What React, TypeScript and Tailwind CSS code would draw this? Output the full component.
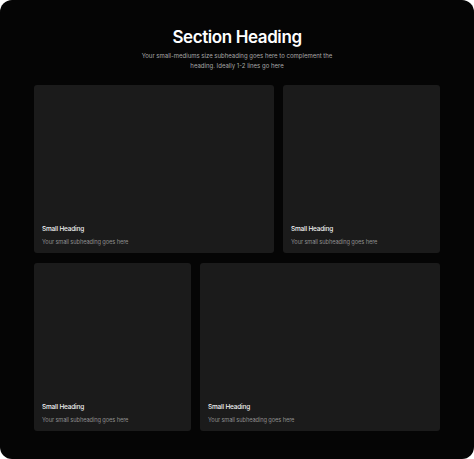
type Card = {
  title: string;
  subtitle: string;
};

function FeatureCard({ title, subtitle }: Card) {
  return (
    <div className="flex flex-col justify-end rounded-[3px] bg-[#1b1b1b] px-2 pb-[7px]">
      <h3 className="text-[6.5px] font-medium leading-[10px] tracking-[-0.2px] text-[#f2f2f2]">{title}</h3>
      <p className="mt-[3px] text-[5.7px] leading-[9px] tracking-[-0.1px] text-[#8e8e8e]">{subtitle}</p>
    </div>
  );
}

export default function App() {
  const card: Card = { title: 'Small Heading', subtitle: 'Your small subheading goes here' };

  return (
    <div className="h-[459px] w-[474px] bg-white font-['Inter',sans-serif]">
      <div className="flex h-full w-full flex-col rounded-[12px] bg-[#050505] px-[34px] pt-[26px]">
        <div className="flex flex-col items-center text-center">
          <h1 className="text-[17px] font-semibold leading-[22px] tracking-[-0.4px] text-white">Section Heading</h1>
          <p className="mt-[3px] w-[200px] text-[6px] leading-[10px] text-[#a8a8a8]">
            Your small-mediums size subheading goes here to complement the heading. Ideally 1-2 lines go here
          </p>
        </div>

        <div className="mt-[14px] flex flex-col gap-[10px]">
          <div className="grid h-[168px] grid-cols-[240px_1fr] gap-[9px]">
            <FeatureCard {...card} />
            <FeatureCard {...card} />
          </div>
          <div className="grid h-[168px] grid-cols-[157px_1fr] gap-[9px]">
            <FeatureCard {...card} />
            <FeatureCard {...card} />
          </div>
        </div>
      </div>
    </div>
  );
}
